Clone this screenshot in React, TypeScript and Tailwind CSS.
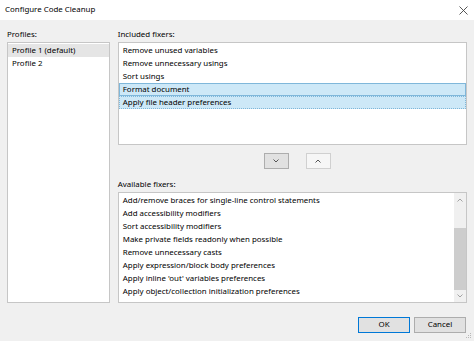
const included = [
  'Remove unused variables',
  'Remove unnecessary usings',
  'Sort usings',
  'Format document',
  'Apply file header preferences',
];

const available = [
  'Add/remove braces for single-line control statements',
  'Add accessibility modifiers',
  'Sort accessibility modifiers',
  'Make private fields readonly when possible',
  'Remove unnecessary casts',
  'Apply expression/block body preferences',
  "Apply inline 'out' variables preferences",
  'Apply object/collection initialization preferences',
];

function Row({ text, state }: { text: string; state?: 'gray' | 'sel' | 'focus' }) {
  let cls = 'h-[13px] flex items-center pl-[3px] whitespace-nowrap border border-transparent';
  if (state === 'gray') cls += ' bg-[#e5e5e5]';
  if (state === 'sel') cls += ' bg-[#cde8f7] !border-[#7fb7da]';
  if (state === 'focus') cls += ' bg-[#cde8f7] !border-[#7fb7da] !border-dotted';
  return <div className={cls}>{text}</div>;
}

export default function App() {
  return (
    <div
      className="w-[474px] h-[341px] flex flex-col bg-[#f0f0f0] text-[7.9px] text-black overflow-hidden relative"
      style={{ fontFamily: '"Noto Sans", "Liberation Sans", sans-serif' }}
    >
      {/* Title bar */}
      <div className="h-[20px] bg-white flex items-center justify-between pl-[5px] pr-[6px] shrink-0">
        <span className="text-[7.9px]">Configure Code Cleanup</span>
        <svg width="9" height="9" viewBox="0 0 9 9">
          <path d="M0.5 0.5L8.5 8.5M8.5 0.5L0.5 8.5" stroke="#444" strokeWidth="0.9" />
        </svg>
      </div>

      <div className="flex flex-col px-[7px] pt-[7px] flex-1">
        <div className="flex gap-[8px]">
          {/* Profiles */}
          <div className="w-[103px] flex flex-col">
            <div className="h-[15px] flex items-center">Profiles:</div>
            <div className="h-[261px] bg-white border border-[#c6c6c6] pt-[1px]">
              <Row text="Profile 1 (default)" state="gray" />
              <Row text="Profile 2" />
            </div>
          </div>

          {/* Fixers */}
          <div className="w-[350px] flex flex-col">
            <div className="h-[15px] flex items-center">Included fixers:</div>
            <div className="h-[103px] bg-white border border-[#c6c6c6] pt-[1px]">
              {included.map((t, i) => (
                <Row key={t} text={t} state={i === 3 ? 'sel' : i === 4 ? 'focus' : undefined} />
              ))}
            </div>

            <div className="flex gap-[17px] mt-[8px] pl-[146px]">
              <button className="w-[25px] h-[16px] bg-[#e1e1e1] border border-[#adadad] flex items-center justify-center">
                <svg width="6" height="4" viewBox="0 0 6 4">
                  <path d="M0.5 0.5L3 3L5.5 0.5" stroke="#555" fill="none" strokeWidth="1" />
                </svg>
              </button>
              <button className="w-[25px] h-[16px] bg-[#f6f6f6] border border-[#d0d0d0] flex items-center justify-center">
                <svg width="6" height="4" viewBox="0 0 6 4">
                  <path d="M0.5 3.5L3 1L5.5 3.5" stroke="#555" fill="none" strokeWidth="1" />
                </svg>
              </button>
            </div>

            <div className="h-[15px] flex items-center mt-[8px]">Available fixers:</div>
            <div className="h-[111px] bg-white border border-[#c6c6c6] flex">
              <div className="flex-1 pt-[1px] overflow-hidden">
                {available.map((t) => (
                  <Row key={t} text={t} />
                ))}
              </div>
              <div className="w-[12px] bg-[#f0f0f0] flex flex-col items-center">
                <div className="h-[14px] flex items-center justify-center">
                  <svg width="6" height="4" viewBox="0 0 6 4">
                    <path d="M0.5 3.5L3 1L5.5 3.5" stroke="#a3a3a3" fill="none" strokeWidth="1" />
                  </svg>
                </div>
                <div className="flex-1 w-full flex flex-col justify-end">
                  <div className="h-[62px] bg-[#cdcdcd]" />
                </div>
                <div className="h-[12px] flex items-center justify-center">
                  <svg width="6" height="4" viewBox="0 0 6 4">
                    <path d="M0.5 0.5L3 3L5.5 0.5" stroke="#a3a3a3" fill="none" strokeWidth="1" />
                  </svg>
                </div>
              </div>
            </div>
          </div>
        </div>

        {/* Bottom buttons */}
        <div className="flex justify-end gap-[4px] mt-[14px] pr-[1px]">
          <button className="w-[52px] h-[16px] bg-[#e1e1e1] border border-[#0078d7] flex items-center justify-center">
            OK
          </button>
          <button className="w-[52px] h-[16px] bg-[#e1e1e1] border border-[#adadad] flex items-center justify-center">
            Cancel
          </button>
        </div>
      </div>

      <svg width="6" height="6" viewBox="0 0 6 6" className="absolute right-[2px] bottom-[2px]">
        <rect x="4" y="0" width="1" height="1" fill="#b8b8b8" />
        <rect x="2" y="2" width="1" height="1" fill="#b8b8b8" />
        <rect x="4" y="2" width="1" height="1" fill="#b8b8b8" />
        <rect x="0" y="4" width="1" height="1" fill="#b8b8b8" />
        <rect x="2" y="4" width="1" height="1" fill="#b8b8b8" />
        <rect x="4" y="4" width="1" height="1" fill="#b8b8b8" />
      </svg>
    </div>
  );
}
